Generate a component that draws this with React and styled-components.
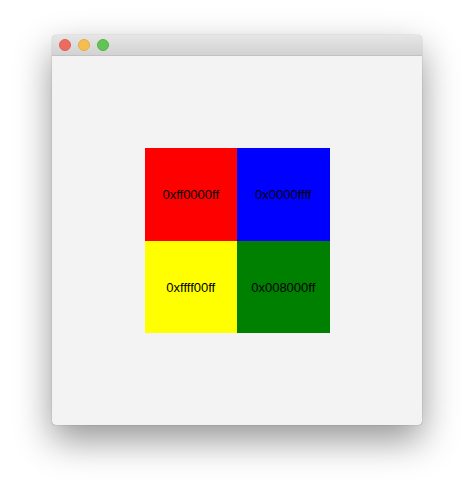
import React from "react";
import styled, { createGlobalStyle } from "styled-components";

const GlobalStyle = createGlobalStyle`
  * {
    box-sizing: border-box;
  }
  body {
    margin: 0;
    background: #ffffff;
    font-family: "Liberation Sans", Arial, sans-serif;
  }
`;

const Desktop = styled.main`
  min-height: 100vh;
  padding: 35px 52px 69px;
  display: flex;
  flex-direction: column;
`;

const Window = styled.section`
  flex: 1;
  display: flex;
  flex-direction: column;
  background: #f3f3f3;
  border-radius: 5px 5px 4px 4px;
  overflow: hidden;
  box-shadow: 0 0 1px rgba(0, 0, 0, 0.5), 0 15px 36px rgba(0, 0, 0, 0.42);
`;

const TitleBar = styled.header`
  height: 21px;
  padding: 0 7px;
  display: flex;
  align-items: center;
  gap: 7px;
  background: linear-gradient(#e6e6e6, #d2d2d2);
  border-bottom: 1px solid #c2c2c2;
`;

const TrafficLight = styled.button`
  width: 12px;
  height: 12px;
  padding: 0;
  border: 1px solid ${(props) => props.$border};
  border-radius: 50%;
  background: ${(props) => props.$color};
`;

const Content = styled.div`
  flex: 1;
  display: flex;
  align-items: center;
  justify-content: center;
`;

const Grid = styled.div`
  width: 50%;
  aspect-ratio: 1;
  display: grid;
  grid-template-columns: 1fr 1fr;
  grid-template-rows: 1fr 1fr;
`;

const Tile = styled.div`
  padding-top: 2px;
  display: flex;
  align-items: center;
  justify-content: center;
  background: ${(props) => props.$color};
  color: #000000;
  font-size: 13px;
  line-height: 16px;
`;

const lights = [
  { label: "Close", color: "#ed6a5f", border: "#dd6155" },
  { label: "Minimize", color: "#f6be50", border: "#e0ac48" },
  { label: "Zoom", color: "#61c555", border: "#57b04b" },
];

const tiles = [
  { label: "0xff0000ff", color: "#ff0000" },
  { label: "0x0000ffff", color: "#0000ff" },
  { label: "0xffff00ff", color: "#ffff00" },
  { label: "0x008000ff", color: "#008000" },
];

export default function App() {
  return (
    <>
      <GlobalStyle />
      <Desktop>
        <Window>
          <TitleBar>
            {lights.map((light) => (
              <TrafficLight
                key={light.label}
                type="button"
                aria-label={light.label}
                $color={light.color}
                $border={light.border}
              />
            ))}
          </TitleBar>
          <Content>
            <Grid>
              {tiles.map((tile) => (
                <Tile key={tile.label} $color={tile.color}>
                  {tile.label}
                </Tile>
              ))}
            </Grid>
          </Content>
        </Window>
      </Desktop>
    </>
  );
}
